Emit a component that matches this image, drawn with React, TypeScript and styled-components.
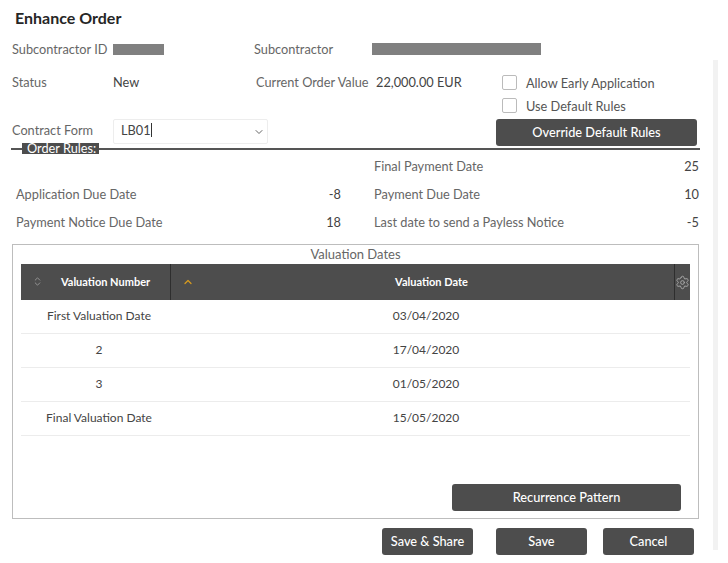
import React from "react";
import styled, { createGlobalStyle } from "styled-components";
import { ChevronDown, ChevronUp, ChevronsUpDown, Settings } from "lucide-react";

const Global = createGlobalStyle`
  html, body { margin: 0; padding: 0; background: #fff; }
  body { font-family: Lato, "Open Sans", sans-serif; font-size: 12.75px; color: #555; }
  * { box-sizing: border-box; }
`;

const Page = styled.div`
  width: 728px;
  height: 563px;
  display: flex;
  overflow: hidden;
`;
const Main = styled.div`
  width: 713px;
  padding: 0 13px 0 12px;
  display: flex;
  flex-direction: column;
`;
const Track = styled.div`
  width: 5px;
  height: 490px;
  margin-top: 60px;
  background: #f2f2f2;
`;
const Title = styled.h1`
  margin: 0 0 0 3px;
  height: 38px;
  padding-top: 8px;
  font-size: 16px;
  line-height: 19px;
  font-weight: 700;
  color: #262626;
`;
const TopRow = styled.div`
  height: 22px;
  display: flex;
  align-items: center;
`;
const Label = styled.span<{ $w?: number }>`
  flex: none;
  width: ${(p) => (p.$w ? `${p.$w}px` : "auto")};
  color: #666;
  white-space: nowrap;
`;
const ContractLabel = styled(Label)`
  margin-bottom: 3px;
`;
const Value = styled.span<{ $w?: number }>`
  flex: none;
  width: ${(p) => (p.$w ? `${p.$w}px` : "auto")};
  color: #444;
  white-space: nowrap;
`;
const Redacted = styled.div<{ $w: number; $h: number; $after?: number }>`
  flex: none;
  width: ${(p) => p.$w}px;
  height: ${(p) => p.$h}px;
  margin-right: ${(p) => p.$after ?? 0}px;
  background: #808080;
`;
const Lower = styled.div`
  margin-top: 11px;
  display: flex;
  height: 75px;
`;
const LowerLeft = styled.div`
  width: 484px;
  display: flex;
  flex-direction: column;
`;
const StatusRow = styled.div`
  height: 22px;
  display: flex;
  align-items: center;
`;
const ContractRow = styled.div`
  margin-top: 26px;
  height: 25px;
  display: flex;
  align-items: center;
`;
const SelectBox = styled.div`
  width: 155px;
  height: 25px;
  border: 1px solid #ededed;
  border-radius: 2px;
  padding: 0 2px 3px 7px;
  display: flex;
  align-items: center;
  justify-content: space-between;
  color: #444;
  background: #fff;
`;
const Caret = styled.span`
  display: inline-block;
  width: 1px;
  height: 14px;
  background: #333;
  vertical-align: -2px;
`;
const Chevron = styled(ChevronDown)`
  margin-top: 3px;
  color: #666;
`;
const LowerRight = styled.div`
  width: 201px;
  display: flex;
  flex-direction: column;
`;
const CheckRow = styled.label`
  height: 23px;
  padding-left: 6px;
  display: flex;
  align-items: center;
  gap: 9px;
  color: #555;
`;
const CheckBox = styled.span`
  width: 15px;
  height: 15px;
  border: 1px solid #bbb;
  border-radius: 2px;
  background: #fff;
`;
const DarkButton = styled.button<{ $w: number }>`
  width: ${(p) => p.$w}px;
  height: 27px;
  padding: 0 0 2px;
  border: 0;
  border-radius: 3px;
  background: #4d4d4d;
  color: #fff;
  font: 500 12.75px Lato, sans-serif;
`;
const OverrideButton = styled(DarkButton)`
  margin-top: 2px;
  flex: none;
`;
const RulesSection = styled.section`
  position: relative;
  margin: 2px 0 0 -1px;
  width: 689px;
  border-top: 2px solid #555;
  padding: 2px 0 0 5px;
  display: grid;
  grid-template-columns: 325px 325px;
  column-gap: 33px;
  grid-auto-rows: 28px;
  align-items: center;
`;
const Legend = styled.span`
  position: absolute;
  left: 11px;
  top: -7px;
  height: 11px;
  padding: 0 3px 0 5px;
  background: #4d4d4d;
  color: #fff;
  line-height: 11px;
`;
const Rule = styled.div`
  display: flex;
  justify-content: space-between;
`;
const Fieldset = styled.section`
  margin-top: 8px;
  width: 687px;
  height: 275px;
  border: 1px solid #bdbdbd;
  padding: 0 8px;
  display: flex;
  flex-direction: column;
`;
const FieldTitle = styled.div`
  height: 19px;
  line-height: 18px;
  font-size: 13px;
  text-align: center;
  color: #666;
`;
const Head = styled.div`
  height: 36px;
  background: #4d4d4d;
  display: grid;
  grid-template-columns: 150px 1fr 16px;
  color: #fff;
  font-size: 11px;
  font-weight: 700;
`;
const HeadFirst = styled.div`
  display: flex;
  align-items: center;
  padding: 0 0 2px 11px;
  gap: 18px;
  border-right: 1px solid #2e2e2e;
`;
const HeadSecond = styled.div`
  position: relative;
  display: flex;
  align-items: center;
  justify-content: center;
  padding: 0 0 2px 18px;
`;
const SortUp = styled(ChevronUp)`
  position: absolute;
  left: 11px;
  top: 12px;
  color: #d69a1f;
`;
const HeadGear = styled.div`
  display: flex;
  align-items: center;
  justify-content: center;
  border-left: 1px solid #2e2e2e;
  color: #aaa;
`;
const Row = styled.div`
  height: 34px;
  padding-bottom: 2px;
  display: grid;
  grid-template-columns: 156px 1fr;
  align-items: center;
  border-bottom: 1px solid #ececec;
  color: #444;
  font-size: 12px;
`;
const NumCell = styled.div`
  text-align: center;
`;
const DateCell = styled.div`
  text-align: center;
  padding-right: 15px;
`;
const RecurrenceBar = styled.div`
  margin-top: 48px;
  padding-right: 9px;
  display: flex;
  justify-content: flex-end;
`;
const Footer = styled.div`
  margin-top: 9px;
  width: 682px;
  display: flex;
  justify-content: flex-end;
`;
const FooterButton = styled(DarkButton)<{ $gap: number }>`
  margin-left: ${(p) => p.$gap}px;
`;

const rows = [
  ["First Valuation Date", "03/04/2020"],
  ["2", "17/04/2020"],
  ["3", "01/05/2020"],
  ["Final Valuation Date", "15/05/2020"],
];

export default function App() {
  return (
    <Page>
      <Global />
      <Main>
        <Title>Enhance Order</Title>
        <TopRow>
          <Label $w={101}>Subcontractor ID</Label>
          <Redacted $w={51} $h={11} $after={90} />
          <Label $w={118}>Subcontractor</Label>
          <Redacted $w={169} $h={12} />
        </TopRow>
        <Lower>
          <LowerLeft>
            <StatusRow>
              <Label $w={101}>Status</Label>
              <Value $w={143}>New</Value>
              <Label $w={120}>Current Order Value</Label>
              <Value>22,000.00 EUR</Value>
            </StatusRow>
            <ContractRow>
              <ContractLabel $w={101}>Contract Form</ContractLabel>
              <SelectBox>
                <span>
                  LB01
                  <Caret />
                </span>
                <Chevron size={12} />
              </SelectBox>
            </ContractRow>
          </LowerLeft>
          <LowerRight>
            <CheckRow>
              <CheckBox />
              Allow Early Application
            </CheckRow>
            <CheckRow>
              <CheckBox />
              Use Default Rules
            </CheckRow>
            <OverrideButton $w={201}>Override Default Rules</OverrideButton>
          </LowerRight>
        </Lower>
        <RulesSection>
          <Legend>Order Rules:</Legend>
          <span />
          <Rule>
            <Label>Final Payment Date</Label>
            <Value>25</Value>
          </Rule>
          <Rule>
            <Label>Application Due Date</Label>
            <Value>-8</Value>
          </Rule>
          <Rule>
            <Label>Payment Due Date</Label>
            <Value>10</Value>
          </Rule>
          <Rule>
            <Label>Payment Notice Due Date</Label>
            <Value>18</Value>
          </Rule>
          <Rule>
            <Label>Last date to send a Payless Notice</Label>
            <Value>-5</Value>
          </Rule>
        </RulesSection>
        <Fieldset>
          <FieldTitle>Valuation Dates</FieldTitle>
          <Head>
            <HeadFirst>
              <ChevronsUpDown size={11} color="#999" />
              <span>Valuation Number</span>
            </HeadFirst>
            <HeadSecond>
              <SortUp size={12} strokeWidth={2.5} />
              <span>Valuation Date</span>
            </HeadSecond>
            <HeadGear>
              <Settings size={15} strokeWidth={1.5} />
            </HeadGear>
          </Head>
          {rows.map(([n, d]) => (
            <Row key={d}>
              <NumCell>{n}</NumCell>
              <DateCell>{d}</DateCell>
            </Row>
          ))}
          <RecurrenceBar>
            <DarkButton $w={229}>Recurrence Pattern</DarkButton>
          </RecurrenceBar>
        </Fieldset>
        <Footer>
          <FooterButton $w={91} $gap={0}>Save &amp; Share</FooterButton>
          <FooterButton $w={91} $gap={23}>Save</FooterButton>
          <FooterButton $w={91} $gap={16}>Cancel</FooterButton>
        </Footer>
      </Main>
      <Track />
    </Page>
  );
}
